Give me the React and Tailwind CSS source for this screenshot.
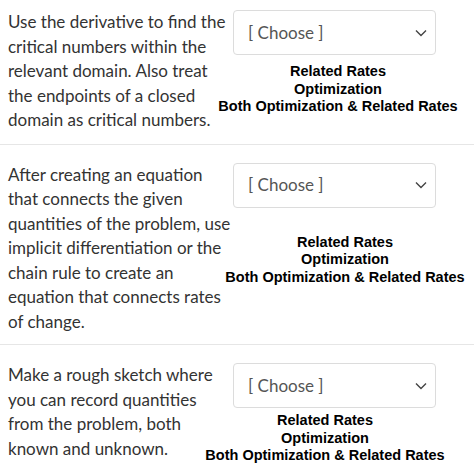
import React from 'react';

const OPTIONS = ['Related Rates', 'Optimization', 'Both Optimization & Related Rates'];

// each row's option list sits a little differently under its select
const rows = [
  {
    text: 'Use the derivative to find the critical numbers within the relevant domain. Also treat the endpoints of a closed domain as critical numbers.',
    pad: 'pt-[10px] pb-[11px]',
    opts: 'mt-[8px] -ml-[15px]',
  },
  {
    text: 'After creating an equation that connects the given quantities of the problem, use implicit differentiation or the chain rule to create an equation that connects rates of change.',
    pad: 'pt-[18px] pb-[10px]',
    opts: 'mt-[26px] -ml-[8px]',
  },
  {
    text: 'Make a rough sketch where you can record quantities from the problem, both known and unknown.',
    pad: 'pt-[18px] pb-[10px]',
    opts: 'mt-[4px] -ml-[28px]',
  },
];

const Chevron = () => (
  <svg width="12" height="8" viewBox="0 0 12 8" fill="none" stroke="#444" strokeWidth="1.4">
    <path d="M1 1.5 L6 6.5 L11 1.5" />
  </svg>
);

const Row = ({ text, pad, opts, last }) => (
  <div className={`flex ${pad} pl-2 ${last ? '' : 'border-b border-[#e6e6e6]'}`}>
    <p className="w-[225px] shrink-0 text-[17px] leading-[24.5px] text-[#333]">{text}</p>
    <div className="w-[241px] flex flex-col">
      <div className="w-[203px] h-[45px] border border-[#dcdcdc] rounded-[4px] flex items-center justify-between pl-[14px] pr-[8px] bg-white">
        <span className="text-[17px] text-[#555]">[ Choose ]</span>
        <Chevron />
      </div>
      <div
        className={`${opts} w-[240px] text-center text-[14.5px] leading-[17.5px] font-bold text-black`}
        style={{ fontFamily: '"Liberation Sans", Arial, sans-serif' }}
      >
        {OPTIONS.map((o) => (
          <div key={o} className="whitespace-nowrap">{o}</div>
        ))}
      </div>
    </div>
  </div>
);

export default function App() {
  return (
    <div className="w-[474px] h-[467px] bg-white overflow-hidden" style={{ fontFamily: 'Lato, "Open Sans", sans-serif' }}>
      {rows.map((r, i) => (
        <Row key={i} {...r} last={i === rows.length - 1} />
      ))}
    </div>
  );
}
